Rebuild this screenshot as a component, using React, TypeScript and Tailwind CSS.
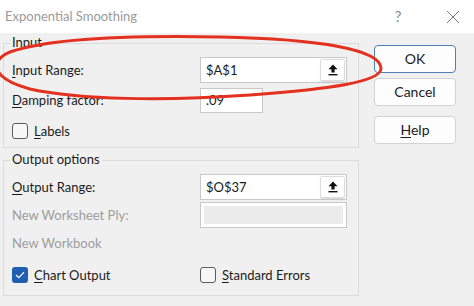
import React from "react";

function UploadIcon() {
  return (
    <svg width="10" height="12" viewBox="0 0 10 12">
      <path d="M5 0.5 L9.5 5.2 H6.6 V8.4 H3.4 V5.2 H0.5 Z" fill="#111" />
      <rect x="0.5" y="10" width="9" height="1.4" fill="#111" />
    </svg>
  );
}

function RangeBox({ value }: { value: string }) {
  return (
    <div className="w-[147px] h-full bg-white border border-[#c9c9c9] flex items-stretch">
      <div className="flex-1 flex items-center pl-[5px] text-[#1b1b1b]">{value}</div>
      <div className="w-[25px] my-[1px] mr-[1px] bg-white border border-[#dcdcdc] shadow-[0_1px_1px_rgba(0,0,0,0.15)] rounded-[2px] flex items-center justify-center">
        <UploadIcon />
      </div>
    </div>
  );
}

function Check({ checked }: { checked?: boolean }) {
  if (checked) {
    return (
      <div className="w-[16px] h-[16px] rounded-[3px] bg-[#1f5fb1] flex items-center justify-center">
        <svg width="10" height="8" viewBox="0 0 10 8">
          <path d="M1 4 L3.8 6.6 L9 1.2" stroke="#fff" strokeWidth="1.2" fill="none" />
        </svg>
      </div>
    );
  }
  return <div className="w-[16px] h-[16px] rounded-[3px] border border-[#5c5c5c] bg-[#f7f7f7]" />;
}

function U({ children }: { children: React.ReactNode }) {
  return <span className="underline underline-offset-[2px] decoration-1">{children}</span>;
}

export default function App() {
  return (
    <div className="w-[474px] h-[306px] bg-[#f0f0f0] relative overflow-hidden font-['Lato',sans-serif] text-[13px] text-[#1b1b1b] leading-none">
      {/* title bar */}
      <div className="h-[33px] bg-white flex items-center">
        <div className="pl-[5px] text-[13px] text-[#9a9a9a] flex-1">Exponential Smoothing</div>
        <div className="w-[20px] text-[15px] text-[#8a8a8a] mr-[38px] text-center">?</div>
        <svg width="14" height="14" viewBox="0 0 14 14" className="mr-[14px]">
          <path d="M1 1 L13 13 M13 1 L1 13" stroke="#777" strokeWidth="1" />
        </svg>
      </div>

      <div className="flex pt-[10px] pl-[3px]">
        {/* left groups */}
        <div className="w-[356px] flex flex-col">
          {/* Input group */}
          <div className="relative h-[105px] border border-[#dcdcdc] pl-[8px]">
            <div className="absolute -top-[8px] left-[6px] px-[2px] bg-[#f0f0f0]">Input</div>
            <div className="mt-[13px] h-[26px] flex items-center">
              <div className="w-[188px]">
                <U>I</U>nput Range:
              </div>
              <RangeBox value="$A$1" />
            </div>
            <div className="mt-[5px] h-[25px] flex items-center">
              <div className="w-[188px]">
                <U>D</U>amping factor:
              </div>
              <div className="w-[63px] h-full bg-white border border-[#c9c9c9] flex items-center pl-[5px]">.09</div>
            </div>
            <div className="mt-[10px] h-[16px] flex items-center gap-[6px]">
              <Check />
              <div>
                <U>L</U>abels
              </div>
            </div>
          </div>

          {/* Output group */}
          <div className="relative mt-[12px] h-[136px] border border-[#dcdcdc] pl-[8px]">
            <div className="absolute -top-[8px] left-[6px] px-[2px] bg-[#f0f0f0]">Output options</div>
            <div className="mt-[13px] h-[26px] flex items-center">
              <div className="w-[188px]">
                <U>O</U>utput Range:
              </div>
              <RangeBox value="$O$37" />
            </div>
            <div className="mt-[2px] h-[26px] flex items-center">
              <div className="w-[188px] text-[#9d9d9d]">New Worksheet Ply:</div>
              <div className="w-[147px] h-full bg-white border border-[#c9c9c9] p-[3px]">
                <div className="w-full h-full bg-[#ececec]" />
              </div>
            </div>
            <div className="mt-[2px] h-[26px] flex items-center text-[#9d9d9d]">New Workbook</div>
            <div className="mt-[11px] h-[16px] flex items-center">
              <div className="w-[188px] flex items-center gap-[6px]">
                <Check checked />
                <div>
                  <U>C</U>hart Output
                </div>
              </div>
              <div className="flex items-center gap-[6px]">
                <Check />
                <div>
                  <U>S</U>tandard Errors
                </div>
              </div>
            </div>
          </div>
        </div>

        {/* buttons */}
        <div className="ml-[15px] w-[82px] flex flex-col pt-[2px]">
          <div className="h-[28px] bg-[#fdfdfd] border border-[#4a80b8] rounded-[4px] flex items-center justify-center text-[14px]">OK</div>
          <div className="mt-[5px] h-[28px] bg-[#fdfdfd] border border-[#d3d3d3] rounded-[4px] flex items-center justify-center text-[14px]">Cancel</div>
          <div className="mt-[10px] h-[28px] bg-[#fdfdfd] border border-[#d3d3d3] rounded-[4px] flex items-center justify-center text-[14px]">
            <span>
              <U>H</U>elp
            </span>
          </div>
        </div>
      </div>

      {/* red annotation ellipse */}
      <svg className="absolute left-0 top-0 pointer-events-none" width="474" height="306" viewBox="0 0 474 306">
        <path
          d="M381 68 C380 50 322 39 220 37 C120 35 45 40 10 52 C-12 61 -8 79 30 89 C80 100 165 101 250 95 C330 89 382 82 381 68 Z"
          stroke="#e3301f"
          strokeWidth="3"
          fill="none"
        />
      </svg>
    </div>
  );
}
